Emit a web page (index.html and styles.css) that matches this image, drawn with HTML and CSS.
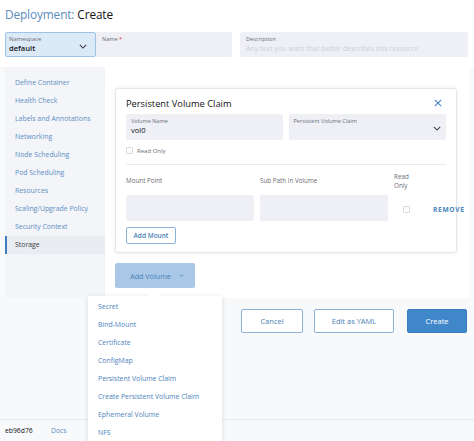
FILE: index.html
```html
<!DOCTYPE html>
<html>
<head>
<meta charset="utf-8">
<link rel="stylesheet" href="styles.css">
</head>
<body>
<div class="page">
  <header class="header">
    <h1 class="title"><span class="title-type">Deployment:</span> Create</h1>
    <div class="top-row">
      <div class="field field-ns">
        <div class="field-label">Namespace</div>
        <div class="field-value bold">default</div>
        <svg class="chev" viewBox="0 0 10 6"><polyline points="1,1 5,5 9,1" /></svg>
      </div>
      <div class="field field-name">
        <div class="field-label">Name <span class="req">*</span></div>
      </div>
      <div class="field field-desc">
        <div class="field-label">Description</div>
        <div class="field-placeholder">Any text you want that better describes this resource</div>
      </div>
    </div>
  </header>

  <main class="main">
    <nav class="tabs">
      <div class="tab">Define Container</div>
      <div class="tab">Health Check</div>
      <div class="tab">Labels and Annotations</div>
      <div class="tab">Networking</div>
      <div class="tab">Node Scheduling</div>
      <div class="tab">Pod Scheduling</div>
      <div class="tab">Resources</div>
      <div class="tab">Scaling/Upgrade Policy</div>
      <div class="tab">Security Context</div>
      <div class="tab active">Storage</div>
    </nav>
    <section class="panel">
      <div class="card">
        <div class="card-head">
          <h2 class="card-title">Persistent Volume Claim</h2>
          <svg class="close" viewBox="0 0 10 10"><line x1="1" y1="1" x2="9" y2="9"/><line x1="9" y1="1" x2="1" y2="9"/></svg>
        </div>
        <div class="card-row">
          <div class="field field-card">
            <div class="field-label">Volume Name</div>
            <div class="field-value">vol0</div>
          </div>
          <div class="field field-card">
            <div class="field-label">Persistent Volume Claim</div>
            <svg class="chev" viewBox="0 0 10 6"><polyline points="1,1 5,5 9,1" /></svg>
          </div>
        </div>
        <label class="check-row"><span class="box"></span><span class="check-text">Read Only</span></label>
        <div class="divider"></div>
        <div class="mount-head">
          <div class="mh-col mh-mount">Mount Point</div>
          <div class="mh-col mh-sub">Sub Path in Volume</div>
          <div class="mh-col mh-ro">Read<br>Only</div>
        </div>
        <div class="mount-row">
          <div class="input-box"></div>
          <div class="input-box"></div>
          <span class="box mr-box"></span>
          <div class="remove">REMOVE</div>
        </div>
        <button class="btn-outline small">Add Mount</button>
      </div>
      <button class="btn-addvol">Add Volume <svg class="chev-sm" viewBox="0 0 10 6"><polyline points="1,1 5,5 9,1" /></svg></button>
    </section>
  </main>

  <div class="actions">
    <button class="btn-outline action">Cancel</button>
    <button class="btn-outline action yaml">Edit as YAML</button>
    <button class="btn-primary action">Create</button>
  </div>

  <footer class="footer">
    <span class="ver">eb96d76</span>
    <span class="flink">Docs</span>
  </footer>

  <ul class="menu">
    <li>Secret</li>
    <li>Bind-Mount</li>
    <li>Certificate</li>
    <li>ConfigMap</li>
    <li>Persistent Volume Claim</li>
    <li>Create Persistent Volume Claim</li>
    <li>Ephemeral Volume</li>
    <li>NFS</li>
  </ul>
</div>
</body>
</html>
```

FILE: styles.css
```css
* { box-sizing: border-box; }
html, body { margin: 0; padding: 0; }
body {
  width: 474px;
  height: 441px;
  overflow: hidden;
  background: #f8f9fb;
  font-family: "Open Sans", "Noto Sans", sans-serif;
  color: #141419;
}
.page {
  position: relative;
  width: 474px;
  height: 441px;
  display: flex;
  flex-direction: column;
}
.header {
  background: #ffffff;
  padding: 4px 6px 0 5px;
  height: 67px;
}
.title {
  margin: 0;
  font-size: 11.8px;
  font-weight: 400;
  line-height: 20px;
  letter-spacing: -0.1px;
}
.title-type { color: #5b8dc0; }
.top-row {
  display: flex;
  margin-top: 8px;
  height: 25px;
}
.field {
  position: relative;
  background: #eef0f5;
  border-radius: 2px;
  padding: 4px 6px;
}
.field-ns {
  width: 91px;
  background: #dce9f6;
  border: 1px solid #9fc3e6;
  padding: 3px 6px 3px 3px;
}
.field-ns .field-label { font-size: 5.9px; }
.field-name { width: 136px; border-radius: 0 2px 2px 0; }
.field-desc { width: 228px; margin-left: 8px; }
.field-label {
  font-size: 5.6px;
  line-height: 7px;
  color: #6c6e75;
}
.req { color: #d33; }
.field-value {
  font-size: 7.6px;
  line-height: 11px;
  color: #141419;
}
.bold { font-weight: 600; }
.field-placeholder {
  font-size: 7px;
  line-height: 11px;
  color: #cdd0d9;
}
.chev {
  position: absolute;
  right: 8px;
  top: 11px;
  width: 8px;
  height: 5px;
  fill: none;
  stroke: #3a3c44;
  stroke-width: 1.3;
}
.main {
  display: flex;
  height: 231px;
  padding-left: 5px;
}
.tabs {
  width: 100px;
  background: #f3f5f9;
  padding-top: 7px;
  height: 231px;
}
.tab {
  height: 18px;
  line-height: 18px;
  padding-left: 10px;
  font-size: 6.9px;
  color: #5d8ec3;
  white-space: nowrap;
}
.tab.active {
  background: #e9ecf1;
  color: #3c3e46;
  border-left: 2px solid #3d7dbd;
  padding-left: 8px;
}
.panel {
  width: 365px;
  background: #ffffff;
  padding: 21px 0 0 10px;
}
.card {
  width: 342px;
  height: 165px;
  background: #ffffff;
  border: 1px solid #e4e6eb;
  border-radius: 3px;
  box-shadow: 0 0 4px rgba(0,0,0,0.08);
  padding: 0 10px 0 10px;
}
.card-head {
  display: flex;
  justify-content: space-between;
  align-items: center;
  height: 25px;
  padding-top: 3px;
}
.card-title {
  margin: 0;
  font-size: 9.3px;
  font-weight: 500;
  color: #141419;
}
.close {
  width: 8px;
  height: 8px;
  stroke: #4a86c0;
  stroke-width: 1.4;
  margin-right: 4px;
}
.card-row {
  display: flex;
  gap: 6px;
  height: 26px;
}
.field-card {
  width: 157px;
  height: 26px;
  padding: 4px 5px;
}
.field-card + .field-card { width: 158px; }
.field-card .chev { top: 12px; right: 5px; }
.check-row {
  display: flex;
  align-items: center;
  gap: 4px;
  height: 20px;
  padding-top: 1px;
}
.box {
  display: inline-block;
  flex-shrink: 0;
  width: 7px;
  height: 7px;
  border: 1px solid #d8dae0;
  border-radius: 1px;
  background: #fff;
}
.check-text {
  font-size: 6px;
  color: #6c6e75;
}
.divider {
  height: 1px;
  background: #e8eaee;
  margin-top: 4px;
}
.mount-head {
  display: flex;
  height: 30px;
  align-items: center;
  font-size: 6.3px;
  color: #6c6e75;
  line-height: 9px;
  padding-top: 1px;
}
.mh-mount { width: 134px; }
.mh-sub { width: 134px; }
.mh-ro { width: 40px; }
.mount-row {
  display: flex;
  align-items: center;
  height: 26px;
}
.input-box {
  flex-shrink: 0;
  width: 128px;
  height: 26px;
  background: #eef0f5;
  border-radius: 2px;
}
.input-box + .input-box { margin-left: 6px; }
.mr-box {
  margin-left: 15px;
  margin-top: 2px;
}
.remove {
  flex-shrink: 0;
  margin-left: 23px;
  font-size: 6.6px;
  font-weight: 700;
  letter-spacing: 0.7px;
  color: #4a86c0;
  padding-top: 3px;
  white-space: nowrap;
}
button {
  font-family: inherit;
  cursor: pointer;
}
.btn-outline {
  background: #ffffff;
  border: 1px solid #8bb3da;
  border-radius: 2px;
  color: #4a7fb5;
}
.btn-outline.small {
  margin-top: 6px;
  width: 50px;
  height: 17px;
  font-size: 6.5px;
  font-weight: 600;
  padding: 0;
}
.btn-addvol {
  display: flex;
  align-items: center;
  justify-content: center;
  gap: 8px;
  margin: 10px 0 0 0;
  width: 80px;
  height: 25px;
  background: #a9c8e7;
  border: none;
  border-radius: 2px;
  color: #4a7fb5;
  font-size: 7.2px;
  padding: 0 0 0 4px;
}
.chev-sm {
  width: 5px;
  height: 3px;
  fill: none;
  stroke: #4a7fb5;
  stroke-width: 1.4;
}
.actions {
  display: flex;
  justify-content: flex-end;
  padding: 11px 7px 0 0;
  gap: 11px;
  height: 121px;
}
.action {
  height: 24px;
  font-size: 7.5px;
  padding: 0;
}
.action:first-child { width: 62px; }
.action.yaml { width: 80px; margin-right: 2px; }
.btn-primary {
  width: 60px;
  background: #3f87c9;
  color: #ffffff;
  border: 1px solid #3a80c0;
  border-radius: 2px;
}
.footer {
  border-top: 1px solid #e6e8ec;
  display: flex;
  align-items: center;
  height: 22px;
  padding-left: 5px;
  font-size: 6.8px;
}
.ver { width: 46px; color: #141419; }
.flink { color: #5d8ec3; width: 36px; }
.menu {
  position: absolute;
  left: 88px;
  top: 296px;
  width: 134px;
  height: 160px;
  margin: 0;
  padding: 2px 0 0 0;
  list-style: none;
  background: #ffffff;
  box-shadow: 0 1px 5px rgba(0,0,0,0.12);
}
.menu li {
  height: 18px;
  line-height: 18px;
  padding-left: 10px;
  font-size: 6.9px;
  color: #4d84bd;
  white-space: nowrap;
}
.menu::before {
  content: "";
  position: absolute;
  left: 62px;
  top: -4px;
  width: 8px;
  height: 8px;
  background: #fff;
  transform: rotate(45deg);
}
```
